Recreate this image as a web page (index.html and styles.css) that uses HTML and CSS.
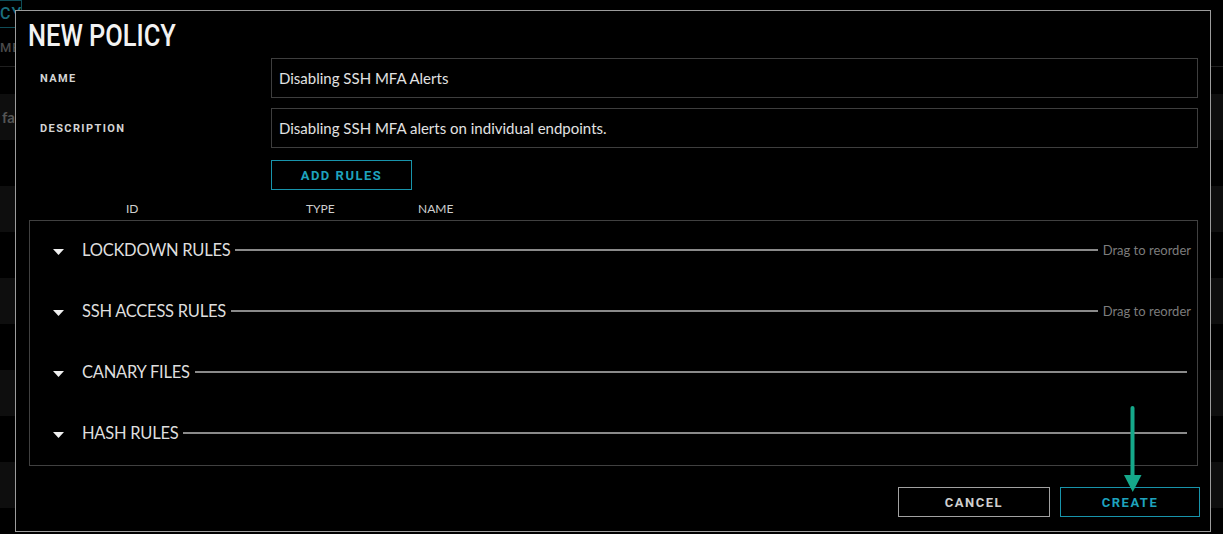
FILE: index.html
```html
<!DOCTYPE html>
<html>
<head>
<meta charset="utf-8">
<link rel="stylesheet" href="styles.css">
</head>
<body>
<div class="page">
  <div class="bg-top"><span class="bg-btn">CY</span></div>
  <div class="bg-head"><span>ME</span></div>
  <div class="bg-rows">
    <div class="bg-row alt"><span>fau</span></div>
    <div class="bg-row"></div>
    <div class="bg-row alt"></div>
    <div class="bg-row"></div>
    <div class="bg-row alt"></div>
    <div class="bg-row"></div>
    <div class="bg-row alt"></div>
    <div class="bg-row"></div>
    <div class="bg-row alt"></div>
  </div>
</div>

<div class="modal">
  <div class="title-wrap"><h1 class="title">NEW POLICY</h1></div>
  <div class="field">
    <span class="label">NAME</span>
    <div class="input">Disabling SSH MFA Alerts</div>
  </div>
  <div class="field">
    <span class="label">DESCRIPTION</span>
    <div class="input">Disabling SSH MFA alerts on individual endpoints.</div>
  </div>
  <div class="add-row"><button class="btn teal add">ADD RULES</button></div>
  <div class="cols"><span>ID</span><span>TYPE</span><span>NAME</span></div>
  <div class="rules">
    <div class="rule">
      <svg class="caret" width="11" height="6" viewBox="0 0 11 6"><polygon points="0,0 11,0 5.5,6"/></svg>
      <span class="rule-title">LOCKDOWN RULES</span>
      <span class="rule-line"></span>
      <span class="drag">Drag to reorder</span>
    </div>
    <div class="rule">
      <svg class="caret" width="11" height="6" viewBox="0 0 11 6"><polygon points="0,0 11,0 5.5,6"/></svg>
      <span class="rule-title">SSH ACCESS RULES</span>
      <span class="rule-line"></span>
      <span class="drag">Drag to reorder</span>
    </div>
    <div class="rule nodrag">
      <svg class="caret" width="11" height="6" viewBox="0 0 11 6"><polygon points="0,0 11,0 5.5,6"/></svg>
      <span class="rule-title">CANARY FILES</span>
      <span class="rule-line"></span>
    </div>
    <div class="rule nodrag">
      <svg class="caret" width="11" height="6" viewBox="0 0 11 6"><polygon points="0,0 11,0 5.5,6"/></svg>
      <span class="rule-title">HASH RULES</span>
      <span class="rule-line"></span>
    </div>
  </div>
  <div class="actions">
    <button class="btn cancel">CANCEL</button>
    <button class="btn teal create">CREATE</button>
  </div>
  <svg class="arrow" width="18" height="87" viewBox="0 0 18 87">
    <line x1="8.5" y1="2" x2="8.5" y2="74" stroke="#15a88a" stroke-width="4" stroke-linecap="round"/>
    <polygon points="0,69 17.5,69 8.75,86" fill="#15a88a"/>
  </svg>
</div>
</body>
</html>
```

FILE: styles.css
```css
* { box-sizing: border-box; }
html, body { margin: 0; padding: 0; background: #000; }
body {
  width: 1223px;
  height: 534px;
  overflow: hidden;
  position: relative;
  font-family: Lato, "Noto Sans", sans-serif;
  color: #ddd;
}

/* background page */
.page { display: flex; flex-direction: column; }
.bg-top { height: 28px; display: flex; }
.bg-btn {
  width: 22px; height: 28px;
  border: 1px solid #0f4d58; border-left: none;
  color: #1b6f7f; font: 500 16px/26px Roboto, sans-serif;
  letter-spacing: 1px; text-align: right; padding-right: 2px; overflow: hidden;
}
.bg-head {
  height: 39px; border-bottom: 1px solid #1f1f1f;
  display: flex; align-items: center;
  color: #4a4a4a; font: 500 13px Roboto, sans-serif; letter-spacing: 1px;
}
.bg-head span { margin-left: 0; }
.bg-rows { padding-top: 27px; display: flex; flex-direction: column; }
.bg-row { height: 46px; display: flex; align-items: center; }
.bg-row.alt { background: #0e0e0e; }
.bg-row span { color: #555; font: 700 15px Lato, sans-serif; margin-left: 2px; }

/* modal */
.modal {
  position: absolute;
  left: 15px; top: 10px;
  width: 1196px; height: 522px;
  border: 1px solid #9c9c9c;
  background: #000;
  padding: 0 12px;
  display: flex; flex-direction: column;
}
.title-wrap { padding-top: 7px; margin-bottom: 4px; height: 43px; }
.title {
  margin: 0;
  font: 500 31px/36px Roboto, sans-serif;
  color: #f2f2f2;
  display: inline-block;
  transform: scaleX(0.82);
  transform-origin: left center;
  white-space: nowrap;
}
.field {
  display: grid;
  grid-template-columns: 243px 1fr;
  align-items: center;
  height: 40px;
  margin-bottom: 10px;
}
.label {
  padding-left: 12px;
  font: 700 11px Roboto, sans-serif;
  letter-spacing: 1.4px;
  color: #d4d4d4;
}
.input {
  height: 40px;
  border: 1px solid #3e3e3e;
  padding-left: 7px;
  display: flex; align-items: center;
  font: 400 15px Lato, sans-serif;
  color: #e2e2e2;
}
.add-row { margin-top: 2px; padding-left: 243px; display: flex; }
.btn {
  background: transparent;
  font: 700 13px Roboto, sans-serif;
  letter-spacing: 1.5px;
  height: 30px;
  padding: 0;
  cursor: pointer;
}
.teal { border: 1px solid #1894ab; color: #1ea3bd; }
.add { width: 141px; height: 30px; }
.cols {
  height: 30px;
  display: grid;
  grid-template-columns: 180px 112px auto;
  align-items: end;
  padding-left: 98px;
  padding-bottom: 4px;
  font: 400 12px/14px Lato, sans-serif;
  color: #cfcfcf;
}
.rules {
  margin-left: 1px;
  height: 246px;
  border: 1px solid #404040;
  display: flex; flex-direction: column;
}
.rule {
  height: 61px;
  display: flex; align-items: center;
  padding-left: 23px;
  padding-right: 6px;
  padding-bottom: 3px;
}
.rule.nodrag { padding-right: 10px; }
.caret { fill: #f0f0f0; flex: none; margin-right: 18px; margin-top: 4px; }
.rule-title { font: 400 16.5px Lato, sans-serif; letter-spacing: -0.25px; color: #dedede; white-space: nowrap; }
.rule-line { flex: 1; height: 2px; background: #8a8a8a; margin: 0 5px; }
.rule.nodrag .rule-line { margin-right: 0; }
.drag { font: 400 13px Lato, sans-serif; color: #7c7c7c; white-space: nowrap; }
.actions {
  margin-top: 21px;
  margin-right: -2px;
  display: flex; justify-content: flex-end; gap: 10px;
}
.cancel { width: 152px; border: 1px solid #a2a2a2; color: #cfcfcf; }
.create { width: 140px; }
.arrow { position: absolute; left: 1108px; top: 395px; }
```
